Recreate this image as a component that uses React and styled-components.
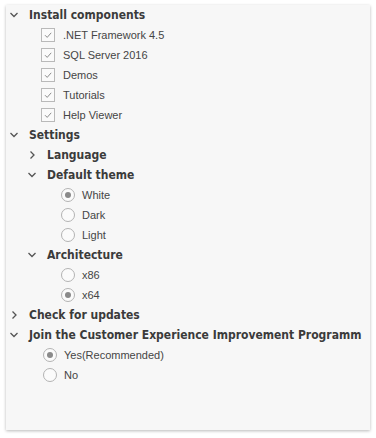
import React from 'react';
import styled, { createGlobalStyle } from 'styled-components';

const GlobalStyle = createGlobalStyle`
  html, body {
    margin: 0;
    padding: 0;
    background: #ffffff;
  }
`;

const Page = styled.div`
  width: 376px;
  height: 438px;
  padding: 5px 6px 8px 6px;
  box-sizing: border-box;
`;

const Panel = styled.div`
  height: 100%;
  box-sizing: border-box;
  background: #f7f7f7;
  box-shadow: 0 1px 3px rgba(0, 0, 0, 0.28);
  overflow: hidden;
`;

const Row = styled.div`
  display: flex;
  align-items: center;
  height: 20px;
  padding-left: ${(p) => p.indent}px;
`;

const Chevron = styled.span`
  display: inline-flex;
  width: 14px;
  justify-content: center;
  margin-right: 8px;
`;

const Title = styled.span`
  font-family: "DejaVu Sans Condensed", "DejaVu Sans", sans-serif;
  font-stretch: condensed;
  font-weight: bold;
  font-size: 12px;
  color: #3b3b3b;
  white-space: nowrap;
`;

const Label = styled.span`
  font-family: "Liberation Sans", Arial, sans-serif;
  font-size: 11px;
  color: #454545;
  white-space: nowrap;
`;

const Box = styled.span`
  width: 12px;
  height: 12px;
  border: 1px solid #b9b9b9;
  background: #fafafa;
  margin-right: 8px;
  display: inline-flex;
  align-items: center;
  justify-content: center;
`;

const Radio = styled.span`
  width: 12px;
  height: 12px;
  border: 1px solid #b3b3b3;
  border-radius: 50%;
  background: #fbfbfb;
  margin-right: 7px;
  display: inline-flex;
  align-items: center;
  justify-content: center;
  &::after {
    content: '';
    width: 6px;
    height: 6px;
    border-radius: 50%;
    background: ${(p) => (p.checked ? '#8a8a8a' : 'transparent')};
  }
`;

function Arrow({ open }) {
  return (
    <Chevron>
      <svg width="10" height="10" viewBox="0 0 10 10">
        {open ? (
          <path d="M1.5 3 L5 6.5 L8.5 3" fill="none" stroke="#555" strokeWidth="1.3" />
        ) : (
          <path d="M3.5 1.5 L7 5 L3.5 8.5" fill="none" stroke="#555" strokeWidth="1.3" />
        )}
      </svg>
    </Chevron>
  );
}

function Group({ indent, open, title }) {
  return (
    <Row indent={indent}>
      <Arrow open={open} />
      <Title>{title}</Title>
    </Row>
  );
}

function Check({ indent, label }) {
  return (
    <Row indent={indent}>
      <Box>
        <svg width="10" height="10" viewBox="0 0 10 10">
          <path d="M2 5.2 L4.2 7.4 L8.2 2.8" fill="none" stroke="#8c8c8c" strokeWidth="1" />
        </svg>
      </Box>
      <Label>{label}</Label>
    </Row>
  );
}

function Option({ indent, label, checked }) {
  return (
    <Row indent={indent}>
      <Radio checked={checked} />
      <Label>{label}</Label>
    </Row>
  );
}

const components = ['.NET Framework 4.5', 'SQL Server 2016', 'Demos', 'Tutorials', 'Help Viewer'];

export default function App() {
  return (
    <Page>
      <GlobalStyle />
      <Panel>
        <Group indent={1} open title="Install components" />
        {components.map((c) => (
          <Check key={c} indent={35} label={c} />
        ))}
        <Group indent={1} open title="Settings" />
        <Group indent={19} title="Language" />
        <Group indent={19} open title="Default theme" />
        <Option indent={55} checked label="White" />
        <Option indent={55} label="Dark" />
        <Option indent={55} label="Light" />
        <Group indent={19} open title="Architecture" />
        <Option indent={55} label="x86" />
        <Option indent={55} checked label="x64" />
        <Group indent={1} title="Check for updates" />
        <Group indent={1} open title="Join the Customer Experience Improvement Programm" />
        <Option indent={37} checked label="Yes(Recommended)" />
        <Option indent={37} label="No" />
      </Panel>
    </Page>
  );
}
